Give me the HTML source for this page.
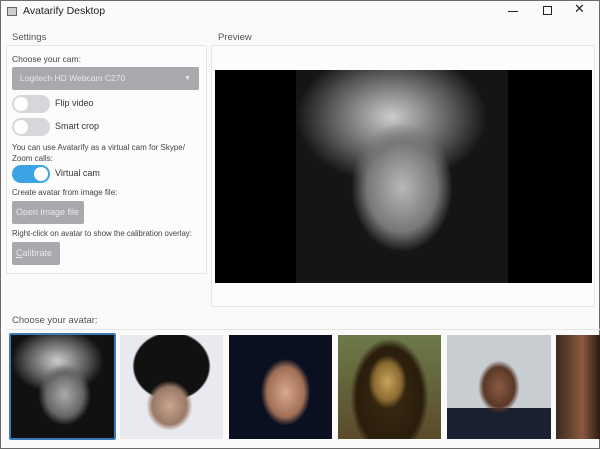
<!DOCTYPE html>
<html><head><style>
*{margin:0;padding:0;box-sizing:border-box}
body{width:600px;height:449px;background:#fafafa;font-family:"Liberation Sans",sans-serif;font-size:8.5px;color:#333;position:relative;overflow:hidden}
.a{position:absolute;white-space:nowrap}
.win{border:1px solid #6b6b6b;width:600px;height:449px;position:absolute;left:0;top:0}
.panel{background:#fcfcfc;border:1px solid #e6e6e6;border-radius:2px}
.tog{width:38px;height:18px;border-radius:9px;background:#d6d7da}
.tog::after{content:"";position:absolute;top:2px;left:2px;width:14px;height:14px;border-radius:7px;background:#fff}
.on{background:#3aa4e5}
.on::after{left:22px}
.btn{background:#a7a9ad;color:#e8e8ea;border-radius:2px;font-size:9.5px;padding-left:4px}
.tile{overflow:hidden}
</style></head><body>
<div class="win"></div>
<div class="a" style="left:7px;top:7px;width:10px;height:9px;border:1px solid #666;background:#ccc"></div>
<div class="a" style="left:23px;top:5px;font-size:10.5px;color:#222">Avatarify Desktop</div>
<div class="a" style="left:508px;top:11px;width:10px;height:1px;background:#222"></div>
<div class="a" style="left:543px;top:6px;width:9px;height:9px;border:1px solid #222"></div>
<div class="a" style="left:574px;top:1px;font-size:13px;color:#222">✕</div>
<div class="a" style="left:12px;top:32px;font-size:9.5px;color:#555">Settings</div>
<div class="a" style="left:218px;top:32px;font-size:9.5px;color:#555">Preview</div>
<div class="a panel" style="left:6px;top:45px;width:201px;height:229px"></div>
<div class="a panel" style="left:211px;top:45px;width:384px;height:262px"></div>
<div class="a" style="left:12px;top:54px;color:#444">Choose your cam:</div>
<div class="a btn" style="left:12px;top:67px;width:187px;height:23px;line-height:23px;padding-left:8px;font-size:8.5px">Logitech HD Webcam C270<span style="position:absolute;right:8px;top:0;font-size:7px">▼</span></div>
<div class="a tog" style="left:12px;top:95px"></div>
<div class="a" style="left:55px;top:98px;font-size:9px">Flip video</div>
<div class="a tog" style="left:12px;top:118px"></div>
<div class="a" style="left:55px;top:121px;font-size:9px">Smart crop</div>
<div class="a" style="left:12px;top:142px;line-height:11px;color:#444;font-size:8px">You can use Avatarify as a virtual cam for Skype/<br>Zoom calls:</div>
<div class="a tog on" style="left:12px;top:165px"></div>
<div class="a" style="left:55px;top:168px;font-size:9px">Virtual cam</div>
<div class="a" style="left:12px;top:188px;color:#444;font-size:8px">Create avatar from image file:</div>
<div class="a btn" style="left:12px;top:201px;width:72px;height:23px;line-height:23px;font-size:9px">Open image file</div>
<div class="a" style="left:12px;top:229px;color:#444;font-size:7.8px">Right-click on avatar to show the calibration overlay:</div>
<div class="a btn" style="left:12px;top:242px;width:48px;height:23px;line-height:23px;font-size:9px"><u>C</u>alibrate</div>
<div class="a" style="left:215px;top:70px;width:377px;height:213px;background:#000"></div>
<div class="a" style="left:296px;top:70px;width:212px;height:213px;background:radial-gradient(ellipse 30% 38% at 50% 55%,#b8b8b8,#777 55%,transparent 80%),radial-gradient(ellipse 50% 35% at 45% 22%,#ccc,#555 60%,transparent 90%),#151515"></div>
<div class="a" style="left:12px;top:315px;font-size:9.5px;color:#555">Choose your avatar:</div>
<div class="a" style="left:6px;top:329px;width:594px;height:1px;background:#e6e6e6"></div>
<div class="a tile" style="left:9px;top:333px;width:107px;height:107px;border:2px solid #3c7cb4;border-radius:2px;background:radial-gradient(ellipse 30% 35% at 52% 58%,#aaa,#666 60%,transparent 85%),radial-gradient(ellipse 50% 35% at 45% 25%,#ccc,#555 60%,transparent 90%),#111"></div>
<div class="a tile" style="left:120px;top:335px;width:103px;height:104px;background:radial-gradient(ellipse 28% 30% at 48% 68%,#caa58e,#9a7a68 60%,transparent 80%),radial-gradient(ellipse 40% 35% at 50% 30%,#111,#111 90%,transparent 95%),#e8eaef"></div>
<div class="a tile" style="left:229px;top:335px;width:103px;height:104px;background:radial-gradient(ellipse 30% 40% at 55% 55%,#d8a98e,#a06e55 60%,transparent 80%),#0b1020"></div>
<div class="a tile" style="left:338px;top:335px;width:103px;height:104px;background:radial-gradient(ellipse 22% 30% at 48% 45%,#c9a35a,#8a6a30 60%,transparent 85%),radial-gradient(ellipse 40% 60% at 50% 60%,#3a2a12,#2a1d0c 80%,transparent 95%),linear-gradient(#6d7a4a,#5a4b2a)"></div>
<div class="a tile" style="left:447px;top:335px;width:104px;height:104px;background:radial-gradient(ellipse 25% 32% at 50% 50%,#8a5a42,#5a3828 60%,transparent 80%),linear-gradient(to bottom,#c8cdd2 70%,#1a2030 70%)"></div>
<div class="a tile" style="left:556px;top:335px;width:44px;height:104px;background:linear-gradient(90deg,#3b2a20,#8a5a40 60%,#2a1a12)"></div>
</body></html>
